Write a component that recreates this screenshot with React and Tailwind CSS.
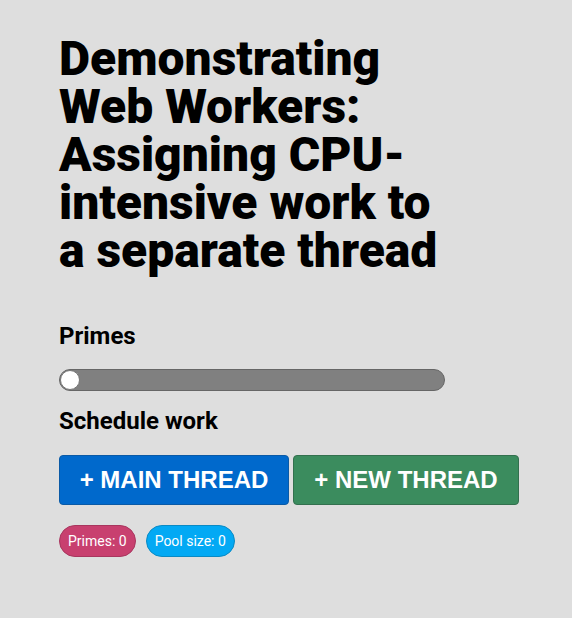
export default function App() {
  return (
    <div className="min-h-[618px] bg-[#dedede] pl-[59px] pt-[35px]" style={{ fontFamily: 'Roboto, "Noto Sans", sans-serif' }}>
      <h1 className="w-[392px] text-[48px] font-black leading-[48px] text-black">
        Demonstrating Web Workers: Assigning CPU-intensive work to a separate thread
      </h1>
      <h2 className="mt-[47px] text-[24px] font-bold leading-[28px] text-black">Primes</h2>
      <div className="mt-[19px] relative h-[22px] w-[386px] rounded-full border border-[#666666] bg-[#808080]">
        <div className="absolute left-0 top-[0px] h-[20px] w-[20px] rounded-full border border-[#777777] bg-white" />
      </div>
      <h2 className="mt-[16px] text-[24px] font-bold leading-[28px] text-black">Schedule work</h2>
      <div className="mt-[20px] flex gap-[4px]" style={{ fontFamily: '"Liberation Sans", Arial, sans-serif' }}>
        <button className="h-[50px] w-[230px] rounded-[4px] border border-[#0a5aa6] bg-[#0069cc] text-[24px] font-bold text-white">
          + MAIN THREAD
        </button>
        <button className="h-[50px] w-[226px] rounded-[4px] border border-[#33704e] bg-[#3b8c5e] text-[24px] font-bold text-white">
          + NEW THREAD
        </button>
      </div>
      <div className="mt-[20px] flex gap-[10px]">
        <span className="flex h-[32px] items-center rounded-full border border-[#a8365e] bg-[#c8406f] px-[8px] text-[14px] text-white">
          Primes: 0
        </span>
        <span className="flex h-[32px] items-center rounded-full border border-[#0a8ac4] bg-[#03a9f4] px-[8px] text-[14px] text-white">
          Pool size: 0
        </span>
      </div>
    </div>
  );
}
